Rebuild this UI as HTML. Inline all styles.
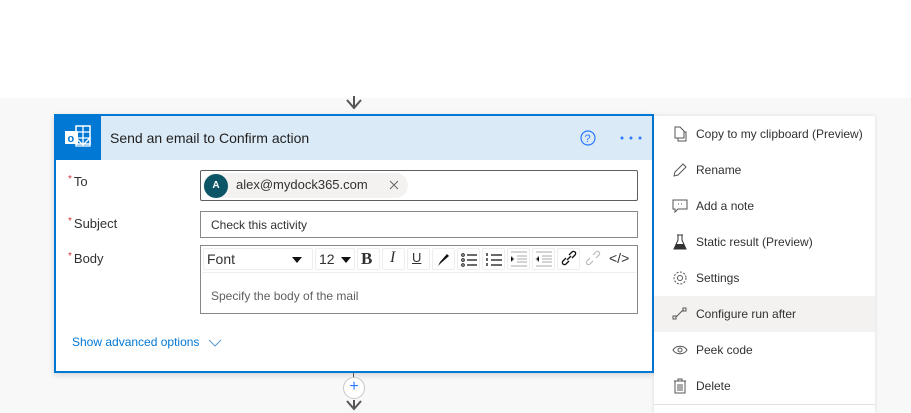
<!DOCTYPE html>
<html><head><style>
*{box-sizing:border-box;margin:0;padding:0}
body{width:911px;height:413px;overflow:hidden;background:#fff;font-family:"Segoe UI","Liberation Sans",sans-serif;position:relative;color:#323130}
.bg{position:absolute;left:0;top:98px;width:911px;height:315px;background:#f8f8f8}
.card{position:absolute;left:54px;top:114px;width:600px;height:259px;border:2px solid #0078d4;background:#fff;box-shadow:0 2px 6px rgba(0,0,0,.15)}
.hdr{position:absolute;left:0;top:0;width:596px;height:44px;background:#dbeaf7}
.ico{position:absolute;left:0;top:0;width:45px;height:44px;background:#0078d4}
.title{position:absolute;left:54px;top:14px;font-size:14px;color:#201f1e}
.lbl{position:absolute;left:12px;font-size:13px;color:#323130}
.lbl b{color:#d13438;font-weight:normal;font-size:10px;vertical-align:top;margin-right:2px}
.inp{position:absolute;left:144px;width:438px;border:1px solid #8a8886;background:#fff;font-size:12px}
.tb{position:absolute;font-size:15px;top:6px}
.bx{position:absolute;top:2px;height:22px;border:1px solid #eee;border-radius:2px}
.mi{position:absolute;left:654px;width:221px;height:36px;font-size:12px;color:#323130}
.mi span{position:absolute;left:42px;top:11px}
.mi svg{position:absolute;left:18px;top:10px}
</style></head><body>
<div class="bg"></div>
<svg style="position:absolute;left:343px;top:96px" width="22" height="18"><path d="M4 4l7 8 7-8M11 12V0" stroke="#555" stroke-width="2" fill="none"/></svg>
<div class="card">
 <div class="hdr">
  <div class="ico"><svg width="45" height="44"><rect x="20" y="10" width="14" height="18" fill="none" stroke="#fff" stroke-width="1.5"/><path d="M20 16h14M20 22h14M27 10v18M20 22l7 7 7-7v8H20z" stroke="#fff" stroke-width="1.3" fill="none"/><rect x="9" y="15" width="13" height="13" fill="#fff"/><text x="11.5" y="26" font-size="11" font-weight="bold" fill="#0078d4" font-family="Liberation Sans">o</text></svg></div>
  <div class="title">Send an email to Confirm action</div>
  <svg style="position:absolute;left:524px;top:14px" width="16" height="16"><circle cx="8" cy="8" r="7" fill="none" stroke="#2b79ff" stroke-width="1.2"/><text x="4.5" y="12" font-size="11" fill="#2b79ff" font-family="Liberation Sans">?</text></svg>
  <svg style="position:absolute;left:563px;top:20px" width="24" height="4"><circle cx="3" cy="2" r="1.5" fill="#2b79ff"/><circle cx="12" cy="2" r="1.5" fill="#2b79ff"/><circle cx="21" cy="2" r="1.5" fill="#2b79ff"/></svg>
 </div>
 <div class="lbl" style="top:58px"><b>*</b>To</div>
 <div class="lbl" style="top:100px"><b>*</b>Subject</div>
 <div class="lbl" style="top:135px"><b>*</b>Body</div>
 <div class="inp" style="top:54px;height:31px;border-color:#605e5c;border-radius:2px">
  <div style="position:absolute;left:2px;top:2px;width:205px;height:25px;background:#f3f2f1;border-radius:13px"></div>
  <div style="position:absolute;left:3px;top:3px;width:24px;height:24px;border-radius:50%;background:#0b5566;color:#fff;font-size:10px;font-weight:bold;text-align:center;line-height:24px">A</div>
  <div style="position:absolute;left:35px;top:6px;font-size:13px">alex@mydock365.com</div>
  <svg style="position:absolute;left:188px;top:9px" width="10" height="10"><path d="M1 1l8 8M9 1l-8 8" stroke="#666"/></svg>
 </div>
 <div class="inp" style="top:95px;height:27px"><span style="position:absolute;left:10px;top:6px">Check this activity</span></div>
 <div class="inp" style="top:129px;height:69px">
  <div class="bx" style="left:2px;width:110px"></div>
  <div class="bx" style="left:114px;width:40px"></div>
  <div class="bx" style="left:156px;width:23px"></div>
  <div class="bx" style="left:181px;width:23px"></div>
  <div class="bx" style="left:206px;width:23px"></div>
  <div class="bx" style="left:231px;width:23px"></div>
  <div class="bx" style="left:256px;width:23px"></div>
  <div class="bx" style="left:281px;width:23px"></div>
  <div class="bx" style="left:306px;width:23px"></div>
  <div class="bx" style="left:331px;width:23px"></div>
  <div class="bx" style="left:356px;width:23px"></div>
  <div style="position:absolute;left:1px;top:26px;width:434px;height:1px;background:#eee"></div>
  <div class="tb" style="left:6px;top:5px;font-size:14px">Font</div>
  <svg class="tb" style="left:91px;top:11px" width="10" height="6"><path d="M0 0h10L5 6z" fill="#111"/></svg>
  <div class="tb" style="left:118px;top:5px;font-size:14px">12</div>
  <svg class="tb" style="left:140px;top:11px" width="10" height="6"><path d="M0 0h10L5 6z" fill="#111"/></svg>
  <div class="tb" style="left:160px;top:3px;font-weight:bold;font-family:'Liberation Serif';font-size:17px">B</div>
  <div class="tb" style="left:189px;top:3px;font-style:italic;font-family:'Liberation Serif';font-size:16px">I</div>
  <div class="tb" style="left:211px;top:4px;text-decoration:underline;font-size:13px">U</div>
  <svg class="tb" style="left:235px;top:5px" width="16" height="16"><path d="M2 15l2-4 7-8 2 2-8 7z" fill="#111"/></svg>
  <svg class="tb" style="left:259px;top:6px" width="18" height="16"><circle cx="3" cy="3" r="1.3" fill="none" stroke="#111"/><circle cx="3" cy="8" r="1.3" fill="none" stroke="#111"/><circle cx="3" cy="13" r="1.3" fill="none" stroke="#111"/><path d="M7 3h10M7 8h10M7 13h10" stroke="#111" stroke-width="1.3"/></svg>
  <svg class="tb" style="left:284px;top:6px" width="18" height="16"><path d="M2 1v3M2 6v3M2 11v3M6 3h11M6 8h11M6 13h11" stroke="#111" stroke-width="1.3"/></svg>
  <svg class="tb" style="left:309px;top:5px" width="18" height="16"><path d="M1 5l3 3-3 3M1 1h16M7 5h10M7 8h10M7 11h10M1 15h16" stroke="#aaa"/></svg>
  <svg class="tb" style="left:334px;top:5px" width="18" height="16"><path d="M4 5l-3 3 3 3M1 1h16M7 5h10M7 8h10M7 11h10M1 15h16" stroke="#aaa"/></svg>
  <svg class="tb" style="left:360px;top:4px" width="16" height="16"><path d="M6 10l4-4M5 8l-3 3a2 2 0 003 3l3-3M11 8l3-3a2 2 0 00-3-3l-3 3" stroke="#111" stroke-width="1.3" fill="none"/></svg>
  <svg class="tb" style="left:384px;top:4px" width="16" height="16"><path d="M5 8l-3 3a2 2 0 003 3l3-3M11 8l3-3a2 2 0 00-3-3l-3 3" stroke="#bbb" stroke-width="1.2" fill="none"/></svg>
  <div class="tb" style="left:408px;top:4px;font-size:14px">&lt;/&gt;</div>
  <div style="position:absolute;left:10px;top:43px;color:#605e5c">Specify the body of the mail</div>
 </div>
 <div style="position:absolute;left:16px;top:219px;font-size:12px;color:#0078d4">Show advanced options</div>
 <svg style="position:absolute;left:152px;top:223px" width="14" height="8"><path d="M1 1l6 6 6-6" stroke="#5b9bd5" fill="none"/></svg>
</div>
<div style="position:absolute;left:353px;top:373px;width:1px;height:6px;background:#555"></div>
<div style="position:absolute;left:343px;top:377px;width:22px;height:22px;border-radius:50%;border:1.5px solid #c8c8c8;background:#fff;color:#2b79ff;text-align:center;line-height:18px;font-size:16px">+</div>
<svg style="position:absolute;left:343px;top:400px" width="22" height="13"><path d="M4 1l7 8 7-8M11 9V0" stroke="#555" stroke-width="2" fill="none"/></svg>

<div style="position:absolute;left:654px;top:116px;width:221px;height:297px;background:#fff;box-shadow:0 0 4px rgba(0,0,0,.12)"></div>
<div style="position:absolute;left:654px;top:296px;width:221px;height:36px;background:#f3f2f1"></div>
<div style="position:absolute;left:654px;top:404px;width:221px;height:1px;background:#e1e1e1"></div>
<div class="mi" style="top:116px"><svg width="16" height="16"><path d="M3 1h5l4 4v7H3zM6 12v3h8V6h-2" fill="none" stroke="#555"/></svg><span>Copy to my clipboard (Preview)</span></div>
<div class="mi" style="top:152px"><svg width="16" height="16"><path d="M2 14l1-4 8-8 3 3-8 8z" fill="none" stroke="#555"/></svg><span>Rename</span></div>
<div class="mi" style="top:188px"><svg width="16" height="16"><path d="M1 2h14v9H6l-3 3v-3H1z" fill="none" stroke="#555"/><path d="M6 6h1M9 6h1" stroke="#555"/></svg><span>Add a note</span></div>
<div class="mi" style="top:224px"><svg width="16" height="16"><path d="M5 1h6M6 1v5l-4 9h12l-4-9V1" fill="none" stroke="#333"/><path d="M4 10h8l2 5H2z" fill="#333"/></svg><span>Static result (Preview)</span></div>
<div class="mi" style="top:260px"><svg width="16" height="16"><circle cx="8" cy="8" r="2.5" fill="none" stroke="#555"/><circle cx="8" cy="8" r="6" fill="none" stroke="#555" stroke-dasharray="2 1.5"/></svg><span>Settings</span></div>
<div class="mi" style="top:296px"><svg width="16" height="16"><rect x="1" y="10" width="3" height="3" fill="none" stroke="#555"/><rect x="11" y="2" width="3" height="3" fill="none" stroke="#555"/><path d="M4 11l7-7" stroke="#555"/></svg><span>Configure run after</span></div>
<div class="mi" style="top:332px"><svg width="16" height="16"><path d="M1 8c3-5 11-5 14 0-3 5-11 5-14 0z" fill="none" stroke="#555"/><circle cx="8" cy="8" r="2" fill="none" stroke="#555"/></svg><span>Peek code</span></div>
<div class="mi" style="top:368px"><svg width="16" height="16"><path d="M2 3h12M6 3V1h4v2M3 3v12h10V3M6 6v7M8 6v7M10 6v7" fill="none" stroke="#555"/></svg><span>Delete</span></div>
</body></html>
